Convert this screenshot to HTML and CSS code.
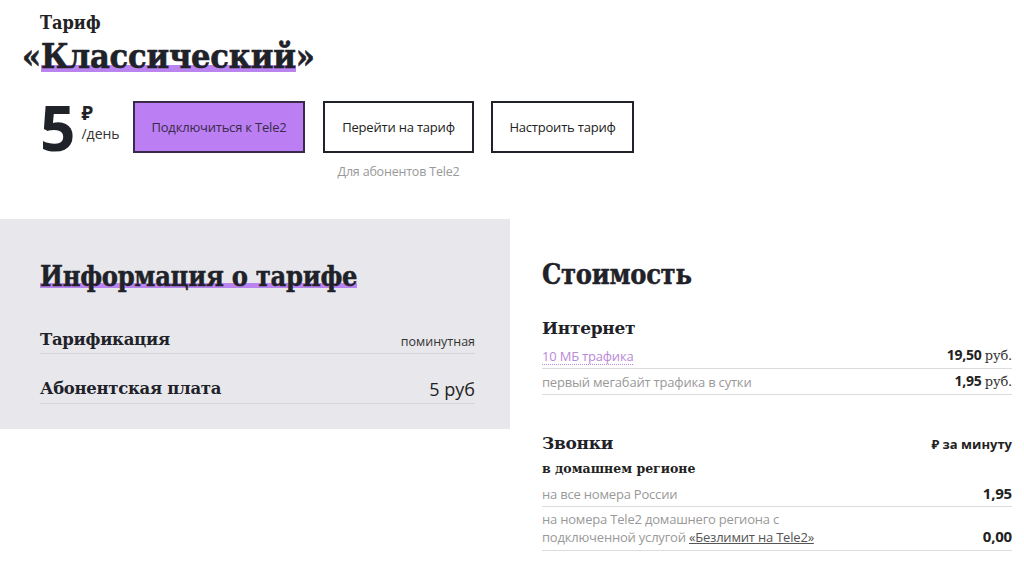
FILE: index.html
```html
<!DOCTYPE html>
<html lang="ru">
<head>
<meta charset="utf-8">
<title>Тариф «Классический»</title>
<link rel="stylesheet" href="styles.css">
</head>
<body>
<header class="hero">
  <div class="kicker">Тариф</div>
  <h1 class="title"><span class="q">«</span><span class="mark">Классический</span>»</h1>
  <div class="price-row">
    <div class="price">
      <span class="price-num">5</span>
      <span class="price-unit"><span class="rub">₽</span><span class="per">/день</span></span>
    </div>
    <a class="btn btn-primary">Подключиться к Tele2</a>
    <div class="btn-col">
      <a class="btn">Перейти на тариф</a>
      <div class="note">Для абонентов Tele2</div>
    </div>
    <a class="btn btn-third">Настроить тариф</a>
  </div>
</header>

<main class="cols">
  <section class="info">
    <h2 class="h2"><span class="mark mark-thin">Информация о тарифе</span></h2>
    <div class="info-row info-row-1">
      <span class="info-label">Тарификация</span>
      <span class="info-small">поминутная</span>
    </div>
    <div class="info-row info-row-2">
      <span class="info-label">Абонентская плата</span>
      <span class="info-big">5 руб</span>
    </div>
  </section>

  <section class="cost">
    <h2 class="h2">Стоимость</h2>

    <div class="group group-net">
      <div class="group-head"><h3 class="h3">Интернет</h3></div>
      <div class="row">
        <a class="link">10 МБ трафика</a>
        <span class="val"><b>19,50</b> <span class="cur">руб.</span></span>
      </div>
      <div class="row">
        <span>первый мегабайт трафика в сутки</span>
        <span class="val"><b>1,95</b> <span class="cur">руб.</span></span>
      </div>
    </div>

    <div class="group group-calls">
      <div class="group-head">
        <h3 class="h3">Звонки</h3>
        <span class="per-min"><span class="rub-s">₽</span> за минуту</span>
      </div>
      <div class="sub">в домашнем регионе</div>
      <div class="row">
        <span>на все номера России</span>
        <span class="val"><b class="num">1,95</b></span>
      </div>
      <div class="row row-two">
        <span>на номера Tele2 домашнего региона с<br>подключенной услугой <a class="ul">«Безлимит на Tele2»</a></span>
        <span class="val"><b class="num">0,00</b></span>
      </div>
    </div>
  </section>
</main>
</body>
</html>
```

FILE: styles.css
```css
* { box-sizing: border-box; }

html, body {
  margin: 0;
  padding: 0;
  background: #ffffff;
  color: #1f2229;
  font-family: "Open Sans", "Noto Sans", sans-serif;
  overflow: hidden;
}

body { width: 1024px; height: 562px; }

.hero {
  padding: 11px 0 0 40px;
  height: 219px;
}

.kicker {
  font-family: "DejaVu Serif", serif;
  font-stretch: condensed;
  font-size: 18px;
  line-height: 24px;
  font-weight: 700;
  color: #222;
}

.title {
  margin: 1px 0 0 -18px;
  font-family: "DejaVu Serif", serif;
  font-stretch: condensed;
  font-weight: 700;
  font-size: 34px;
  line-height: 40px;
  letter-spacing: -0.2px;
  color: #1f2229;
  -webkit-text-stroke: 0.6px #1f2229;
}

.mark {
  background-image: linear-gradient(#b983f0, #b983f0);
  background-repeat: no-repeat;
  background-size: 100% 7px;
  background-position: 0 calc(100% - 4px);
}

.mark-thin {
  background-size: 100% 5px;
  background-position: 0 calc(100% - 4px);
}

.price-row {
  display: flex;
  align-items: flex-start;
  margin-top: 25px;
}

.price {
  display: flex;
  align-items: flex-start;
  width: 93px;
}

.price-num {
  font-family: "Open Sans", sans-serif;
  font-weight: 700;
  font-size: 62px;
  line-height: 50px;
  letter-spacing: -2px;
  margin-top: 1px;
  color: #1f2229;
}

.price-unit {
  display: flex;
  flex-direction: column;
  margin-left: 8px;
  padding-top: 2px;
}

.rub {
  font-weight: 700;
  font-size: 19px;
  line-height: 20px;
}

.per {
  font-size: 14px;
  line-height: 18px;
  color: #333;
  margin-top: 2px;
}

.btn {
  display: flex;
  align-items: center;
  justify-content: center;
  height: 52px;
  border: 2px solid #1f2229;
  background: #fff;
  font-size: 13px;
  color: #222;
  letter-spacing: -0.2px;
  white-space: nowrap;
}

.btn-primary {
  width: 172px;
  background: #bb7ef3;
  border-color: #3a2a4a;
  color: #3a2a4a;
}

.btn-col {
  display: flex;
  flex-direction: column;
  align-items: center;
  margin-left: 18px;
}

.btn-col .btn { width: 151px; }

.note {
  margin-top: 10px;
  font-size: 12.5px;
  color: #999;
  letter-spacing: -0.2px;
}

.btn-third {
  width: 143px;
  margin-left: 17px;
}

.cols {
  display: flex;
  align-items: flex-start;
}

.info {
  width: 510px;
  height: 210px;
  background: #e8e8ec;
  padding: 40px 35px 0 40px;
}

.h2 {
  margin: 0;
  font-family: "DejaVu Serif", serif;
  font-stretch: condensed;
  font-weight: 700;
  font-size: 27px;
  line-height: 36px;
  letter-spacing: -0.3px;
  color: #1f2229;
  -webkit-text-stroke: 0.4px #1f2229;
}

.info .h2 { margin-bottom: 26px; }

.info-row {
  display: flex;
  justify-content: space-between;
  align-items: flex-end;
  border-bottom: 1px solid #d6d6da;
  line-height: 20px;
}

.info-row-1 { height: 33px; padding-bottom: 3px; }
.info-row-2 { height: 50px; padding-bottom: 4px; }

.info-label {
  font-family: "DejaVu Serif", serif;
  font-weight: 600;
  font-size: 16.5px;
  letter-spacing: -0.3px;
}

.info-small {
  font-size: 12.5px;
  color: #333;
  margin-bottom: -2px;
}

.info-big {
  font-size: 18px;
  color: #222;
}

.cost {
  width: 470px;
  margin-left: 32px;
  padding-top: 38px;
}

.group-net { margin-top: 23px; }
.group-net .group-head { margin-bottom: 3px; }
.group-calls { margin-top: 36px; }

.group-head {
  display: flex;
  justify-content: space-between;
  align-items: baseline;
}

.h3 {
  margin: 0;
  font-family: "DejaVu Serif", serif;
  font-weight: 600;
  font-size: 17px;
  line-height: 24px;
  letter-spacing: -0.3px;
  color: #1f2229;
}

.per-min {
  font-size: 13px;
  font-weight: 700;
  color: #222;
}

.sub {
  font-family: "DejaVu Serif", serif;
  font-weight: 700;
  font-size: 12.5px;
  line-height: 20px;
  margin-top: 4px;
  margin-bottom: 2px;
  color: #222;
}

.row {
  display: flex;
  justify-content: space-between;
  align-items: flex-end;
  border-bottom: 1px solid #dcdcdc;
  font-size: 13px;
  line-height: 18px;
  color: #999;
  padding: 3px 0 3px;
  letter-spacing: -0.2px;
}

.row-two { padding-top: 3px; padding-bottom: 4px; }

.link {
  color: #b98ad8;
  border-bottom: 1px dotted #b98ad8;
  line-height: 15px;
}

.ul {
  color: #555;
  text-decoration: underline;
}

.val { color: #222; white-space: nowrap; }

.val b {
  font-weight: 700;
  font-size: 14px;
}

.val .num { font-size: 15px; }

.cur {
  font-family: "DejaVu Serif", serif;
  font-size: 13px;
  color: #333;
}
```
